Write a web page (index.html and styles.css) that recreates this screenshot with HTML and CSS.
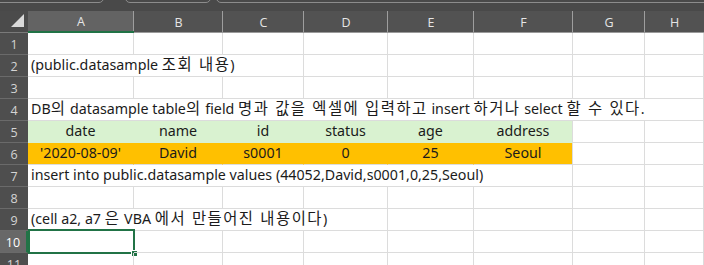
FILE: index.html
```html
<!DOCTYPE html>
<html lang="ko">
<head>
<meta charset="utf-8">
<title>Sheet</title>
<link rel="stylesheet" href="styles.css">
</head>
<body>
<div class="sheet">
  <div class="toolbar">
    <div class="tb-box tb-name"></div>
    <div class="tb-box tb-fx"></div>
    <div class="tb-box tb-formula"></div>
  </div>
  <div class="grid">
    <div class="corner">
      <svg width="14" height="14" viewBox="0 0 14 14"><polygon points="13,0 13,13 0,13" fill="#d9d9d9"/></svg>
    </div>
    <div class="colhead sel">A</div>
    <div class="colhead">B</div>
    <div class="colhead">C</div>
    <div class="colhead">D</div>
    <div class="colhead">E</div>
    <div class="colhead">F</div>
    <div class="colhead">G</div>
    <div class="colhead last">H</div>

    <div class="rowhead">1</div>
    <div class="cell"></div><div class="cell"></div><div class="cell"></div><div class="cell"></div><div class="cell"></div><div class="cell"></div><div class="cell"></div><div class="cell"></div>

    <div class="rowhead">2</div>
    <div class="cell span3"><span>(public.datasample <span class="ko">조회 내용</span>)</span></div><div class="cell"></div><div class="cell"></div><div class="cell"></div><div class="cell"></div><div class="cell"></div>

    <div class="rowhead">3</div>
    <div class="cell"></div><div class="cell"></div><div class="cell"></div><div class="cell"></div><div class="cell"></div><div class="cell"></div><div class="cell"></div><div class="cell"></div>

    <div class="rowhead">4</div>
    <div class="cell span8"><span>DB<span class="ko">의</span> datasample table<span class="ko">의</span> field <span class="ko">명과 값을 엑셀에 입력하고</span> insert <span class="ko">하거나</span> select <span class="ko">할 수 있다</span>.</span></div>

    <div class="rowhead">5</div>
    <div class="cell hdr center">date</div><div class="cell hdr center">name</div><div class="cell hdr center">id</div><div class="cell hdr center">status</div><div class="cell hdr center">age</div><div class="cell hdr center end">address</div><div class="cell"></div><div class="cell"></div>

    <div class="rowhead">6</div>
    <div class="cell val center">'2020-08-09'</div><div class="cell val center">David</div><div class="cell val center">s0001</div><div class="cell val center">0</div><div class="cell val center">25</div><div class="cell val center end">Seoul</div><div class="cell"></div><div class="cell"></div>

    <div class="rowhead">7</div>
    <div class="cell span6">insert into public.datasample values (44052,David,s0001,0,25,Seoul)</div><div class="cell"></div><div class="cell"></div>

    <div class="rowhead">8</div>
    <div class="cell"></div><div class="cell"></div><div class="cell"></div><div class="cell"></div><div class="cell"></div><div class="cell"></div><div class="cell"></div><div class="cell"></div>

    <div class="rowhead">9</div>
    <div class="cell span4"><span>(cell a2, a7 <span class="ko">은</span> VBA <span class="ko">에서 만들어진 내용이다</span>)</span></div><div class="cell"></div><div class="cell"></div><div class="cell"></div><div class="cell"></div>

    <div class="rowhead active">10</div>
    <div class="cell selected"><span class="handle"></span></div><div class="cell"></div><div class="cell"></div><div class="cell"></div><div class="cell"></div><div class="cell"></div><div class="cell"></div><div class="cell"></div>

    <div class="rowhead">11</div>
    <div class="cell"></div><div class="cell"></div><div class="cell"></div><div class="cell"></div><div class="cell"></div><div class="cell"></div><div class="cell"></div><div class="cell"></div>
  </div>
</div>
</body>
</html>
```

FILE: styles.css
```css
html, body {
  margin: 0;
  padding: 0;
  background: #ffffff;
  overflow: hidden;
}

.sheet {
  width: 704px;
  height: 265px;
  overflow: hidden;
  background: #ffffff;
}

.toolbar {
  height: 11px;
  background: #494949;
  display: flex;
  overflow: hidden;
}

.tb-box {
  height: 14px;
  margin-top: -11px;
  border: 1px solid #8c8c8c;
  border-radius: 5px;
  box-sizing: border-box;
}

.tb-name {
  width: 114px;
  margin-left: -10px;
}

.tb-fx {
  width: 86px;
  margin-left: 21px;
}

.tb-formula {
  flex: 1;
  margin-left: 5px;
  margin-right: -10px;
}

.grid {
  display: grid;
  grid-template-columns: 28px 106px 89px 81px 84px 86px 99px 72px 1fr;
  grid-auto-rows: 22px;
}

.corner {
  background: #4b4b4b;
  border-bottom: 1px solid #7a7a7a;
  box-sizing: border-box;
  display: flex;
  align-items: flex-end;
  justify-content: flex-end;
  padding: 0 3px 4px 0;
}

.corner svg {
  display: block;
}

.colhead {
  background: #525252;
  color: #e6e6e6;
  font-family: "Open Sans", "Noto Sans", sans-serif;
  font-size: 12.5px;
  display: flex;
  align-items: center;
  justify-content: center;
  box-sizing: border-box;
  border-bottom: 1px solid #9a9a9a;
  position: relative;
  padding-top: 1px;
}

.colhead::after {
  content: "";
  position: absolute;
  right: 0;
  top: 0;
  bottom: 0;
  width: 1px;
  background: #9e9e9e;
}

.colhead.last::after {
  display: none;
}

.colhead.sel {
  background: #636363;
  border-bottom: 2px solid #217346;
}

.rowhead {
  background: #4e4e4e;
  color: #d4d4d4;
  font-family: "Open Sans", "Noto Sans", sans-serif;
  font-size: 12.5px;
  display: flex;
  align-items: center;
  justify-content: center;
  border-bottom: 1px solid #6a6a6a;
  box-sizing: border-box;
  padding-top: 1px;
}

.rowhead.active {
  background: #686868;
  color: #ffffff;
  border-right: 2px solid #217346;
}

.cell {
  box-sizing: border-box;
  border-right: 1px solid #dcdcdc;
  border-bottom: 1px solid #dcdcdc;
  font-family: "Noto Sans", "Noto Sans CJK KR", sans-serif;
  font-size: 14.25px;
  color: #1b1b1b;
  white-space: nowrap;
  display: flex;
  align-items: flex-end;
  padding: 0 0 2px 3px;
  line-height: 18px;
  position: relative;
}

.ko {
  font-family: "Noto Sans CJK KR", sans-serif;
  font-size: 15.4px;
  letter-spacing: 1.5px;
}

.center {
  justify-content: center;
  padding-left: 0;
}

.span3 { grid-column: span 3; }
.span4 { grid-column: span 4; }
.span6 { grid-column: span 6; }
.span8 { grid-column: span 8; }

.hdr {
  background: #d9f2d0;
  border-right-color: #d9f2d0;
  border-bottom-color: #d9f2d0;
}

.val {
  background: #ffc000;
  border-right-color: #ffc000;
}

.hdr.end,
.val.end {
  border-right-color: #dcdcdc;
}

.selected {
  border: none;
}

.selected::before {
  content: "";
  position: absolute;
  left: 0;
  top: -2px;
  right: -1px;
  bottom: -1px;
  border: 2px solid #217346;
}

.handle {
  position: absolute;
  right: -4px;
  bottom: -4px;
  width: 5px;
  height: 5px;
  background: #217346;
  border: 1px solid #ffffff;
}
```
